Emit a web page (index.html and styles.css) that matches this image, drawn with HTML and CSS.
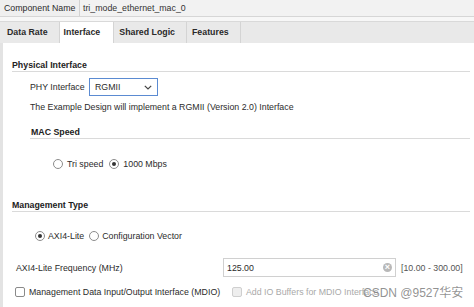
FILE: index.html
```html
<!DOCTYPE html>
<html>
<head>
<meta charset="utf-8">
<link rel="stylesheet" href="styles.css">
</head>
<body>
<div class="top">
  <span class="cn-label">Component Name</span>
  <div class="cn-input">tri_mode_ethernet_mac_0</div>
</div>
<div class="spacer"></div>
<div class="tabs">
  <div class="tab first">Data Rate</div>
  <div class="tab active">Interface</div>
  <div class="tab">Shared Logic</div>
  <div class="tab">Features</div>
</div>
<div class="content">
  <div class="section-title">Physical Interface</div>
  <div class="phy">
    <span class="phy-label">PHY Interface</span>
    <div class="select"><span class="select-val">RGMII</span>
      <svg class="chev" width="8" height="5" viewBox="0 0 8 5"><path d="M0.8 0.8 L4 4 L7.2 0.8" fill="none" stroke="#444" stroke-width="1.2"/></svg>
    </div>
  </div>
  <div class="note">The Example Design will implement a RGMII (Version 2.0) Interface</div>
  <div class="sub-title">MAC Speed</div>
  <div class="radios speed">
    <span class="radio-item"><span class="radio"></span>Tri speed</span>
    <span class="radio-item"><span class="radio on"></span>1000 Mbps</span>
  </div>
  <div class="section-title mgmt">Management Type</div>
  <div class="radios axi">
    <span class="radio-item"><span class="radio on"></span>AXI4-Lite</span>
    <span class="radio-item"><span class="radio"></span>Configuration Vector</span>
  </div>
  <div class="freq">
    <span class="freq-label">AXI4-Lite Frequency (MHz)</span>
    <div class="freq-input"><span>125.00</span><span class="clear">×</span></div>
    <span class="range">[10.00 - 300.00]</span>
  </div>
  <div class="checks">
    <span class="check-item mdio"><span class="box"></span>Management Data Input/Output Interface (MDIO)</span>
    <span class="check-item disabled"><span class="box"></span>Add IO Buffers for MDIO Interface</span>
  </div>
</div>
<div class="watermark">CSDN @9527华安</div>
</body>
</html>
```
FILE: styles.css
```css
html, body {
  margin: 0;
  padding: 0;
}
body {
  font-family: "Liberation Sans", Arial, sans-serif;
  font-size: 8.8px;
  color: #2b2b2b;
  background: #fff;
  width: 474px;
  height: 307px;
  overflow: hidden;
  display: flex;
  flex-direction: column;
}
.top {
  display: flex;
  height: 16px;
  flex: none;
  background: #efefef;
  border-bottom: 1px solid #d6d6d6;
}
.cn-label {
  width: 75px;
  padding-left: 4px;
  line-height: 16px;
}
.cn-input {
  flex: 1;
  border-left: 1px solid #d2d2d2;
  background: #f2f2f2;
  padding-left: 3px;
  line-height: 16px;
  color: #333;
}
.spacer {
  height: 4px;
  flex: none;
  background: #f7f7f7;
}
.tabs {
  display: flex;
  height: 21px;
  flex: none;
  background: #e9e9e9;
  border-top: 1px solid #d9d9d9;
}
.tab {
  padding: 0 11px 0 5px;
  line-height: 21px;
  font-weight: bold;
  color: #2a2a2a;
  border-right: 1px solid #d4d4d4;
}
.tab.first {
  padding-left: 7px;
}
.tab.active {
  background: #fff;
  padding-left: 4px;
  padding-right: 13px;
}
.content {
  flex: 1;
  min-height: 0;
  overflow: hidden;
  border-left: 3px solid #e3e3e3;
  padding: 0 4px 0 9px;
}
.section-title {
  margin-top: 16px;
  line-height: 12px;
  font-weight: bold;
  color: #222;
  border-bottom: 1px solid #dadada;
}
.phy {
  margin-top: 6px;
  height: 18px;
  padding-left: 18px;
  display: flex;
  align-items: center;
}
.phy-label {
  width: 59px;
}
.select {
  box-sizing: border-box;
  width: 69px;
  height: 18px;
  border: 1px solid #5b8bd2;
  background: #fff;
  display: flex;
  align-items: center;
  padding-left: 5px;
  padding-right: 5px;
  justify-content: space-between;
}
.chev {
  display: block;
}
.note {
  margin-top: 6px;
  line-height: 11px;
  padding-left: 18px;
}
.sub-title {
  margin: 13px 0 0 18px;
  padding-left: 1px;
  line-height: 12px;
  font-weight: bold;
  color: #222;
  border-bottom: 1px solid #dadada;
}
.radios {
  display: flex;
  align-items: center;
  height: 13px;
}
.radios.speed {
  margin-top: 18px;
  padding-left: 41px;
}
.radios.speed .radio-item {
  margin-right: 6px;
}
.radios.axi {
  margin-top: 17px;
  padding-left: 23px;
}
.radios.axi .radio-item {
  margin-right: 5px;
  gap: 3px;
}
.section-title.mgmt {
  margin-top: 29px;
}
.radio-item {
  display: inline-flex;
  align-items: center;
  gap: 4px;
}
.radio {
  box-sizing: border-box;
  width: 10px;
  height: 10px;
  border-radius: 50%;
  border: 1px solid #8c8c8c;
  background: #fff;
  display: inline-flex;
  align-items: center;
  justify-content: center;
}
.radio.on::after {
  content: "";
  width: 4px;
  height: 4px;
  border-radius: 50%;
  background: #333;
}
.freq {
  margin-top: 16px;
  height: 19px;
  display: flex;
  align-items: center;
}
.freq-label {
  width: 211px;
  padding-left: 4px;
  box-sizing: border-box;
}
.freq-input {
  box-sizing: border-box;
  width: 173px;
  height: 19px;
  border: 1px solid #d0d0d0;
  background: #fff;
  display: flex;
  align-items: center;
  justify-content: space-between;
  padding: 0 3px 0 3px;
}
.clear {
  width: 9px;
  height: 9px;
  border-radius: 50%;
  background: #b8b8b8;
  color: #fff;
  font-size: 9px;
  line-height: 9px;
  text-align: center;
  font-weight: bold;
}
.range {
  margin-left: 5px;
  color: #555;
}
.checks {
  margin-top: 9px;
  display: flex;
  align-items: center;
  height: 12px;
  padding-left: 3px;
}
.check-item {
  display: inline-flex;
  align-items: center;
  gap: 4px;
}
.check-item.mdio {
  width: 217px;
}
.box {
  box-sizing: border-box;
  width: 10px;
  height: 10px;
  border: 1px solid #8a8a8a;
  border-radius: 2px;
  background: #fff;
}
.check-item.disabled {
  color: #a9a9a9;
}
.check-item.disabled .box {
  border-color: #cfcfcf;
  background: #eeeeee;
}
.watermark {
  position: absolute;
  left: 363px;
  top: 283px;
  font-size: 12px;
  color: rgba(110, 110, 110, 0.75);
  font-family: "Liberation Sans", "Noto Sans CJK SC", sans-serif;
}
```
